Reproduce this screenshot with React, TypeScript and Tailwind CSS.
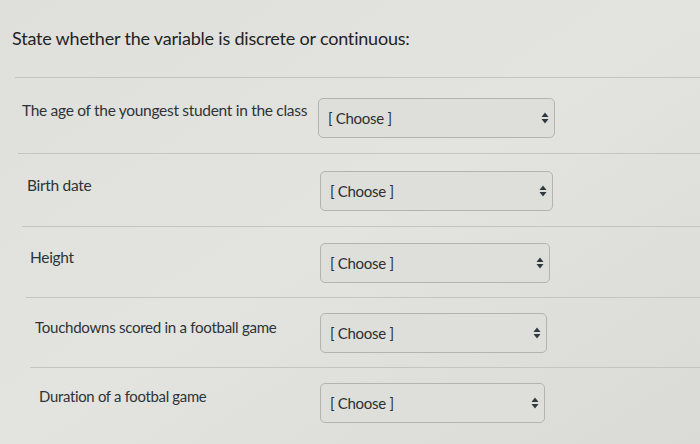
import React from "react";

const rows = [
  { label: "The age of the youngest student in the class", divMl: "ml-[15px]", labelPl: "pl-[22px]", colW: "w-[318px]", h: "h-[76px]", labelMt: "mt-[23px]", fs: "text-[15.5px]", selW: "w-[237px]", selMt: "mt-[20px]" },
  { label: "Birth date", divMl: "ml-[18px]", labelPl: "pl-[27px]", colW: "w-[320px]", h: "h-[73px]", labelMt: "mt-[22px]", fs: "text-[15.5px]", selW: "w-[233px]", selMt: "mt-[17px]" },
  { label: "Height", divMl: "ml-[22px]", labelPl: "pl-[30px]", colW: "w-[320px]", h: "h-[71px]", labelMt: "mt-[21px]", fs: "text-[15.5px]", selW: "w-[230px]", selMt: "mt-[16px]" },
  { label: "Touchdowns scored in a football game", divMl: "ml-[26px]", labelPl: "pl-[35px]", colW: "w-[320px]", h: "h-[70px]", labelMt: "mt-[20px]", fs: "text-[15.1px]", selW: "w-[227px]", selMt: "mt-[15px]" },
  { label: "Duration of a footbal game", divMl: "ml-[30px]", labelPl: "pl-[39px]", colW: "w-[320px]", h: "h-[76px]", labelMt: "mt-[19px]", fs: "text-[14.9px]", selW: "w-[225px]", selMt: "mt-[15px]" },
];

function Arrows() {
  return (
    <svg width="8" height="12" viewBox="0 0 8 12" className="shrink-0">
      <path d="M4 0.5 L7.5 5 H0.5 Z" fill="#2f3a40" />
      <path d="M4 11.5 L7.5 7 H0.5 Z" fill="#2f3a40" />
    </svg>
  );
}

export default function App() {
  return (
    <div
      className="w-[700px] h-[444px] overflow-hidden bg-gradient-to-br from-[#dfe0dc] via-[#e3e4e0] to-[#dadbd6] text-[#2e3336]"
      style={{ fontFamily: "Lato, 'Open Sans', sans-serif" }}
    >
      <div className="pl-[12px] pt-[26px] h-[77px] text-[18px] leading-[24px] tracking-[-0.2px] text-[#1f2325]">
        State whether the variable is discrete or continuous:
      </div>
      <div>
        {rows.map((r, i) => (
          <div key={i} className={r.h}>
            <div className={`${r.divMl} border-t-[1.5px] border-[#c4c5c0]`} />
            <div className="flex items-start">
              <div className={`${r.colW} shrink-0 ${r.labelPl} ${r.labelMt} ${r.fs} leading-[18px] tracking-[-0.3px] whitespace-nowrap`}>
                {r.label}
              </div>
              <div
                className={`${r.selMt} ${r.selW} h-[40px] rounded-[5px] border border-[#b3b4af] bg-[#dedfda] flex items-center justify-between pl-[9px] pr-[5px]`}
              >
                <span className="text-[15px] tracking-[-0.3px] text-[#2a2f33]">[ Choose ]</span>
                <Arrows />
              </div>
            </div>
          </div>
        ))}
      </div>
    </div>
  );
}
